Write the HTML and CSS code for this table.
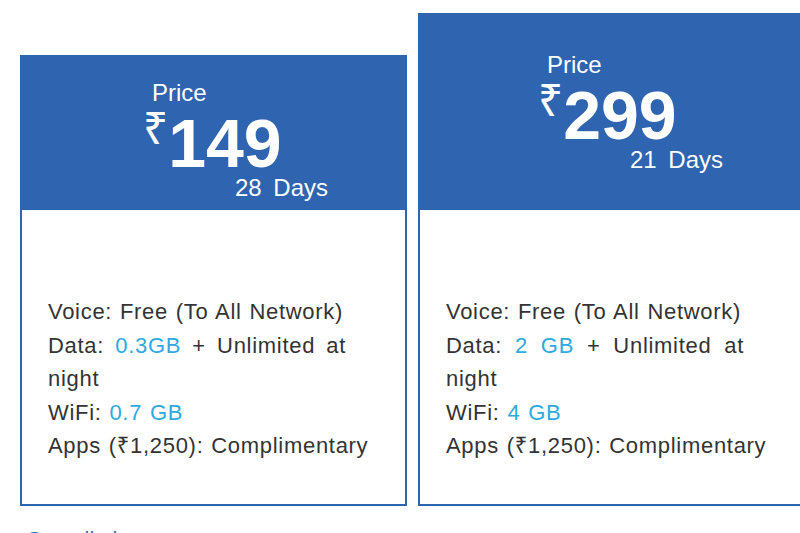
FILE: index.html
```html
<!DOCTYPE html>
<html lang="en">
<head>
<meta charset="utf-8">
<title>Plans</title>
<link rel="stylesheet" href="styles.css">
</head>
<body>
<main class="page">
  <section class="plans">
    <article class="plan">
      <header class="plan-head">
        <div class="price-block">
          <div class="price-label">Price</div>
          <div class="price-amount"><span class="cur">₹</span><span class="num">149</span></div>
          <div class="price-days">28 Days</div>
        </div>
      </header>
      <div class="plan-body">
        <div class="features">
          <div class="feat nowrap">Voice: Free (To All Network)</div>
          <div class="feat">Data: <span class="hl">0.3GB</span> + Unlimited at night</div>
          <div class="feat nowrap">WiFi: <span class="hl">0.7 GB</span></div>
          <div class="feat nowrap">Apps (₹1,250): Complimentary</div>
        </div>
      </div>
    </article>
    <article class="plan plan-featured">
      <header class="plan-head">
        <div class="price-block">
          <div class="price-label">Price</div>
          <div class="price-amount"><span class="cur">₹</span><span class="num">299</span></div>
          <div class="price-days">21 Days</div>
        </div>
      </header>
      <div class="plan-body">
        <div class="features">
          <div class="feat nowrap">Voice: Free (To All Network)</div>
          <div class="feat">Data: <span class="hl">2 GB</span> + Unlimited at night</div>
          <div class="feat nowrap">WiFi: <span class="hl">4 GB</span></div>
          <div class="feat nowrap">Apps (₹1,250): Complimentary</div>
        </div>
      </div>
    </article>
  </section>
  <a class="all-link" href="#">See all plans</a>
</main>
</body>
</html>
```

FILE: styles.css
```css
html, body {
  margin: 0;
  padding: 0;
  overflow: hidden;
  background: #ffffff;
}

body {
  font-family: "Liberation Sans", "Noto Sans", "DejaVu Sans", sans-serif;
  color: #333333;
}

.page {
  width: 800px;
  height: 533px;
  overflow: hidden;
}

.plans {
  display: flex;
  align-items: flex-end;
  gap: 11px;
  padding-left: 20px;
  height: 506px;
}

.plan {
  flex: 0 0 387px;
  display: flex;
  flex-direction: column;
}

.plan-head {
  background: #2f64b0;
  color: #ffffff;
  height: 155px;
  box-sizing: border-box;
  padding: 25px 0 0 123px;
}

.plan-featured .plan-head {
  height: 197px;
  padding-top: 39px;
  padding-left: 120px;
}

.price-block {
  display: inline-block;
}

.price-label {
  font-size: 24px;
  line-height: 26px;
  padding-left: 9px;
}

.price-amount {
  display: flex;
  align-items: flex-start;
  height: 69px;
  white-space: nowrap;
}

.cur {
  font-family: "Noto Sans", "DejaVu Sans", sans-serif;
  font-size: 44px;
  line-height: 44px;
  margin-top: -1px;
}

.num {
  font-size: 68px;
  font-weight: bold;
  line-height: 75px;
}

.price-days {
  font-size: 24px;
  line-height: 26px;
  padding-left: 92px;
  word-spacing: 5px;
  white-space: nowrap;
}

.plan-body {
  height: 296px;
  box-sizing: border-box;
  border: 2px solid #2f64b0;
  border-top: none;
  padding: 85px 0 0 26px;
}

.features {
  width: 298px;
  font-size: 22px;
  line-height: 33.5px;
  letter-spacing: 0.7px;
  word-spacing: 1px;
  text-align: justify;
}

.feat.nowrap {
  white-space: nowrap;
}

.hl {
  color: #2eaade;
}

.all-link {
  display: inline-block;
  margin: 21px 0 0 27px;
  font-size: 22px;
  color: #3a6fb8;
  text-decoration: none;
}
```
